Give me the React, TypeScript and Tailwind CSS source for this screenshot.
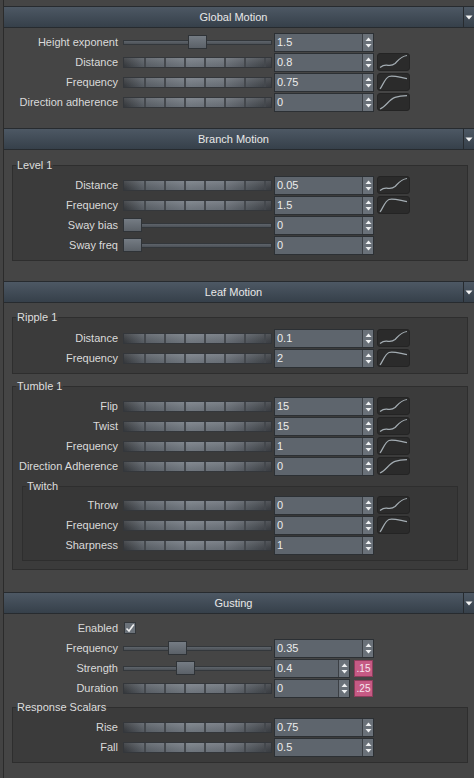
import { clsx } from 'clsx';

type CurveKind = 'wave' | 'peak' | 'ease';

interface RowDef {
  label: string;
  value: string;
  kind: 'seg' | 'slide' | 'check';
  thumb?: number;
  curve?: CurveKind;
  badge?: string;
}

const CURVES: Record<CurveKind, string> = {
  wave: 'M2 13.5 C4 12 6 10.8 9 11.2 C12 11.6 14 12.2 17 9.5 C20 6.5 23 2.2 29 1.5',
  peak: 'M2 15 C5 11 7 4 11 2.5 C15 1.2 21 3.2 29 4.6',
  ease: 'M2 15 C8 12.5 11 5.5 17 3.4 C21 2.2 25 1.8 29 1.7'
};

const SegTrack = () => (
  <div className="flex h-[11px] w-[149px] overflow-hidden border border-[#34373b] bg-[linear-gradient(to_right,#383b3f,#5c6269_14%,#757c84_45%,#6d737b_68%,#4c5157_90%,#3d4045)]">
    {[20, 20, 20, 20, 20, 20, 20, 7].map((w, i) => (
      <div
        key={i}
        style={{ width: w }}
        className={clsx(
          'h-full shrink-0 bg-gradient-to-b from-white/10 to-black/5',
          i > 0 && 'border-l-2 border-[#44484d]'
        )}
      />
    ))}
  </div>
);

const Slide = ({ pos }: { pos: number }) => (
  <div className="relative flex h-[14px] w-[149px] items-center">
    <div className="h-[5px] w-full border border-[#33373b] bg-gradient-to-b from-[#5e646b] to-[#4c5157]" />
    <div
      style={{ left: pos }}
      className="absolute top-0 h-[14px] w-[19px] border border-[#2f3337] bg-gradient-to-b from-[#757c84] to-[#5b6168]"
    />
  </div>
);

const Spinner = () => (
  <div className="flex w-[11px] shrink-0 flex-col items-center justify-center gap-[3px] border-l border-[#3b3f44] bg-[#6a7179]">
    <svg width="7" height="4" viewBox="0 0 7 4">
      <path d="M0.5 4 L3.5 0.5 L6.5 4 Z" fill="#eef0f2" />
    </svg>
    <svg width="7" height="4" viewBox="0 0 7 4">
      <path d="M0.5 0 L3.5 3.5 L6.5 0 Z" fill="#eef0f2" />
    </svg>
  </div>
);

const NumberField = ({ value, narrow }: { value: string; narrow?: boolean }) => (
  <div
    className={clsx(
      'ml-[2px] flex h-[19px] shrink-0 border border-[#2c3034] bg-[#5e656d]',
      narrow ? 'w-[76px]' : 'w-[100px]'
    )}
  >
    <div className="flex flex-1 items-center pl-[2px] text-[#ececec]">{value}</div>
    <Spinner />
  </div>
);

const CurveButton = ({ kind }: { kind: CurveKind }) => (
  <div className="ml-[3px] h-[18px] w-[33px] shrink-0 rounded-[3px] border border-[#242424] bg-[#2b2b2b]">
    <svg width="31" height="16" viewBox="0 0 31 16">
      <path d={CURVES[kind]} fill="none" stroke="#a4adb3" strokeWidth="1.2" />
    </svg>
  </div>
);

const Badge = ({ text }: { text: string }) => (
  <div className="ml-[4px] flex h-[17px] w-[19px] shrink-0 items-center justify-center border border-[#8e3d5c] bg-[#c65a84] text-[10px] text-[#f6e6ee]">
    {text}
  </div>
);

const Check = () => (
  <div className="ml-[6px] flex h-[12px] w-[12px] items-center justify-center border border-[#33373b] bg-[#6b727a]">
    <svg width="10" height="10" viewBox="0 0 10 10">
      <path d="M1.5 5.5 L4 8 L8.8 1.6" fill="none" stroke="#f2f2f2" strokeWidth="1.6" />
    </svg>
  </div>
);

const Row = ({ row, labelW }: { row: RowDef; labelW: string }) => (
  <div className="flex h-5 items-center">
    <div className={clsx('flex shrink-0 justify-end whitespace-nowrap', labelW)}>{row.label}</div>
    {row.kind === 'check' ? (
      <Check />
    ) : (
      <>
        <div className="ml-[5px] shrink-0">
          {row.kind === 'seg' ? <SegTrack /> : <Slide pos={row.thumb ?? 0} />}
        </div>
        <NumberField value={row.value} narrow={!!row.badge} />
        {row.curve && <CurveButton kind={row.curve} />}
        {row.badge && <Badge text={row.badge} />}
      </>
    )}
  </div>
);

const Header = ({ title }: { title: string }) => (
  <div className="flex h-[22px] border-y border-[#272b2f] text-[#e8e8e8]">
    <div className="flex flex-1 items-center justify-center bg-gradient-to-b from-[#4d5864] to-[#36404a]">
      {title}
    </div>
    <div className="flex w-[11px] items-center justify-center border-l border-[#272b2f] bg-gradient-to-b from-[#4d5864] to-[#36404a]">
      <svg width="8" height="5" viewBox="0 0 8 5">
        <path d="M0.5 0.5 L7.5 0.5 L4 4.5 Z" fill="#f4f4f4" />
      </svg>
    </div>
  </div>
);

const Group = ({
  title,
  className,
  children
}: {
  title: string;
  className: string;
  children: React.ReactNode;
}) => (
  <fieldset className={clsx('border border-[#2e2e2e] pb-[5px]', className)}>
    <legend className="ml-[3px] px-px leading-[12px] text-[#dedede]">{title}</legend>
    {children}
  </fieldset>
);

const GLOBAL: RowDef[] = [
  { label: 'Height exponent', value: '1.5', kind: 'slide', thumb: 65 },
  { label: 'Distance', value: '0.8', kind: 'seg', curve: 'wave' },
  { label: 'Frequency', value: '0.75', kind: 'seg', curve: 'peak' },
  { label: 'Direction adherence', value: '0', kind: 'seg', curve: 'ease' }
];

const LEVEL1: RowDef[] = [
  { label: 'Distance', value: '0.05', kind: 'seg', curve: 'wave' },
  { label: 'Frequency', value: '1.5', kind: 'seg', curve: 'peak' },
  { label: 'Sway bias', value: '0', kind: 'slide', thumb: 0 },
  { label: 'Sway freq', value: '0', kind: 'slide', thumb: 0 }
];

const RIPPLE: RowDef[] = [
  { label: 'Distance', value: '0.1', kind: 'seg', curve: 'wave' },
  { label: 'Frequency', value: '2', kind: 'seg', curve: 'peak' }
];

const TUMBLE: RowDef[] = [
  { label: 'Flip', value: '15', kind: 'seg', curve: 'wave' },
  { label: 'Twist', value: '15', kind: 'seg', curve: 'wave' },
  { label: 'Frequency', value: '1', kind: 'seg', curve: 'peak' },
  { label: 'Direction Adherence', value: '0', kind: 'seg', curve: 'ease' }
];

const TWITCH: RowDef[] = [
  { label: 'Throw', value: '0', kind: 'seg', curve: 'wave' },
  { label: 'Frequency', value: '0', kind: 'seg', curve: 'peak' },
  { label: 'Sharpness', value: '1', kind: 'seg' }
];

const GUSTING: RowDef[] = [
  { label: 'Enabled', value: '', kind: 'check' },
  { label: 'Frequency', value: '0.35', kind: 'slide', thumb: 45 },
  { label: 'Strength', value: '0.4', kind: 'slide', thumb: 53, badge: '.15' },
  { label: 'Duration', value: '0', kind: 'seg', badge: '.25' }
];

const RESPONSE: RowDef[] = [
  { label: 'Rise', value: '0.75', kind: 'seg' },
  { label: 'Fall', value: '0.5', kind: 'seg' }
];

export default function App() {
  return (
    <div className="flex h-[778px] w-[474px] overflow-hidden bg-[#454545] font-['Liberation_Sans',Arial,sans-serif] text-[11px] text-[#dadada]">
      <div className="w-[4px] shrink-0 border-r border-[#2b2b2b] bg-[#434343]" />
      <div className="flex flex-1 flex-col">
        <div className="h-[6px] shrink-0" />

        <Header title="Global Motion" />
        <div className="pt-[4px] pb-[16px]">
          {GLOBAL.map((r) => (
            <Row key={r.label} row={r} labelW="w-[114px]" />
          ))}
        </div>

        <Header title="Branch Motion" />
        <div className="pt-[9px] pb-[20px]">
          <Group title="Level 1" className="mr-[6px] ml-[8px] bg-[#3b3b3b] pt-[4px]">
            {LEVEL1.map((r) => (
              <Row key={r.label} row={r} labelW="w-[105px]" />
            ))}
          </Group>
        </div>

        <Header title="Leaf Motion" />
        <div className="pt-[8px] pb-[22px]">
          <Group title="Ripple 1" className="mr-[6px] ml-[8px] bg-[#3b3b3b] pt-[5px]">
            {RIPPLE.map((r) => (
              <Row key={r.label} row={r} labelW="w-[105px]" />
            ))}
          </Group>
          <Group title="Tumble 1" className="mt-[6px] mr-[6px] ml-[8px] bg-[#3b3b3b] pt-[4px] !pb-[8px]">
            {TUMBLE.map((r) => (
              <Row key={r.label} row={r} labelW="w-[105px]" />
            ))}
            <Group title="Twitch" className="mt-[4px] mr-[9px] ml-[9px] bg-[#373737] pt-[3px]">
              {TWITCH.map((r) => (
                <Row key={r.label} row={r} labelW="w-[95px]" />
              ))}
            </Group>
          </Group>
        </div>

        <Header title="Gusting" />
        <div className="pt-[4px]">
          {GUSTING.map((r) => (
            <Row key={r.label} row={r} labelW="w-[114px]" />
          ))}
          <Group title="Response Scalars" className="mt-[3px] mr-[6px] ml-[8px] bg-[#3b3b3b] pt-[4px]">
            {RESPONSE.map((r) => (
              <Row key={r.label} row={r} labelW="w-[105px]" />
            ))}
          </Group>
        </div>
      </div>
    </div>
  );
}
